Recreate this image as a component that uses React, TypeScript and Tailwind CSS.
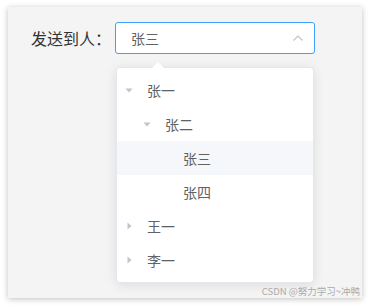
import React from 'react';

type Node = { label: string; level: number; caret: 'down' | 'right' | null; active?: boolean };

const nodes: Node[] = [
  { label: '张一', level: 0, caret: 'down' },
  { label: '张二', level: 1, caret: 'down' },
  { label: '张三', level: 2, caret: null, active: true },
  { label: '张四', level: 2, caret: null },
  { label: '王一', level: 0, caret: 'right' },
  { label: '李一', level: 0, caret: 'right' },
];

function Caret({ dir }: { dir: 'down' | 'right' }) {
  return (
    <svg width="8" height="8" viewBox="0 0 8 8" className="shrink-0">
      {dir === 'down' ? <path d="M0.5 2.5h7L4 6.5z" fill="#c0c4cc" /> : <path d="M2.5 0.5v7L6.5 4z" fill="#c0c4cc" />}
    </svg>
  );
}

export default function App() {
  return (
    <div className="w-[369px] h-[306px] bg-white pt-[7px] pl-[8px]" style={{ fontFamily: '"Noto Sans CJK SC", "Noto Sans", sans-serif' }}>
      <div className="relative w-[354px] h-[291px] bg-[#f4f4f4] shadow-[0_1px_6px_rgba(0,0,0,0.25)]">
        <div className="flex items-center pt-[15px] pl-[23px]">
          <span className="text-[16px] text-[#333] w-[84px] leading-none">发送到人：</span>
          <div className="w-[200px] h-[32px] bg-white border border-[#409eff] rounded-[3px] flex items-center pl-[15px] pr-[10px]">
            <span className="text-[14px] text-[#606266] flex-1">张三</span>
            <svg width="12" height="8" viewBox="0 0 12 8">
              <path d="M1.5 6.5L6 2l4.5 4.5" stroke="#c0c4cc" strokeWidth="1.2" fill="none" />
            </svg>
          </div>
        </div>
        <div className="relative ml-[108px] mt-[13px] w-[198px] bg-white rounded-[4px] border border-[#e4e7ed] shadow-[0_2px_12px_rgba(0,0,0,0.1)] py-[5px]">
          <div className="absolute -top-[6px] left-[35px] w-0 h-0 border-l-[6px] border-r-[6px] border-b-[6px] border-l-transparent border-r-transparent border-b-white" />
          {nodes.map((n) => (
            <div
              key={n.label}
              className={`h-[34px] flex items-center text-[14px] text-[#606266] ${n.active ? 'bg-[#f5f7fa]' : ''}`}
              style={{ paddingLeft: n.level * 18 }}
            >
              <span className="w-[24px] flex justify-center">{n.caret && <Caret dir={n.caret} />}</span>
              <span className="ml-[6px]">{n.label}</span>
            </div>
          ))}
        </div>
        <div className="absolute right-[2px] bottom-[0px] text-[9.5px] text-[#aaa] leading-[14px]">CSDN @努力学习~冲鸭</div>
      </div>
    </div>
  );
}
